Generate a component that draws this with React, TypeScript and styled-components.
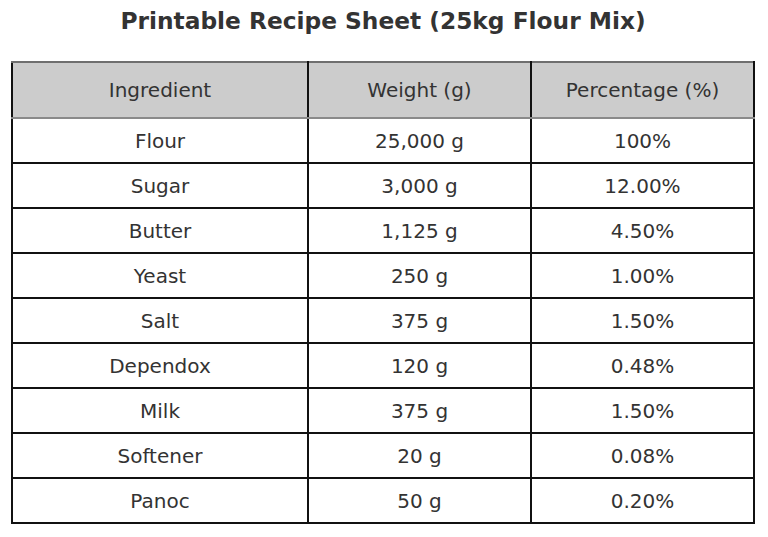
import styled, { createGlobalStyle } from "styled-components";

interface I_Row {
    name: string;
    weight: string;
    percent: string;
};

const rows: I_Row[] = [
    { name: "Flour", weight: "25,000 g", percent: "100%" },
    { name: "Sugar", weight: "3,000 g", percent: "12.00%" },
    { name: "Butter", weight: "1,125 g", percent: "4.50%" },
    { name: "Yeast", weight: "250 g", percent: "1.00%" },
    { name: "Salt", weight: "375 g", percent: "1.50%" },
    { name: "Dependox", weight: "120 g", percent: "0.48%" },
    { name: "Milk", weight: "375 g", percent: "1.50%" },
    { name: "Softener", weight: "20 g", percent: "0.08%" },
    { name: "Panoc", weight: "50 g", percent: "0.20%" },
];

const GlobalStyle = createGlobalStyle`
    html, body {
        margin: 0;
        padding: 0;
        background: #ffffff;
        font-family: "DejaVu Sans", "Liberation Sans", sans-serif;
    }
`;

const Page = styled.div`
    width: 768px;
    height: 537px;
    display: flex;
    flex-direction: column;
    padding: 7px 0 0 11px;
    box-sizing: border-box;
`;

const Title = styled.h1`
    width: 744px;
    margin: 0;
    text-align: center;
    font-size: 23.3px;
    font-weight: bold;
    color: #333333;
    line-height: 28px;
`;

const Table = styled.table`
    margin-top: 26px;
    width: 743px;
    border-collapse: collapse;
    table-layout: fixed;
    color: #333333;
    font-size: 20px;

    th, td {
        text-align: center;
        padding: 0;
        border: 2px solid #111111;
    }
`;

const HeadCell = styled.th<{ $w: number }>`
    width: ${(props) => props.$w}px;
    height: 54px;
    background-color: #cccccc;
    font-weight: normal;
    && {
        border-top-color: #6f6f6f;
        border-bottom-color: #8a8a8a;
    }
`;

const Cell = styled.td`
    height: 43px;
`;

function App() {
    return (
        <Page>
            <GlobalStyle />
            <Title>Printable Recipe Sheet (25kg Flour Mix)</Title>
            <Table>
                <thead>
                    <tr>
                        <HeadCell $w={294}>Ingredient</HeadCell>
                        <HeadCell $w={221}>Weight (g)</HeadCell>
                        <HeadCell $w={221}>Percentage (%)</HeadCell>
                    </tr>
                </thead>
                <tbody>
                    {
                        rows.map((row) => {
                            return (
                                <tr key={row.name}>
                                    <Cell>{row.name}</Cell>
                                    <Cell>{row.weight}</Cell>
                                    <Cell>{row.percent}</Cell>
                                </tr>
                            );
                        })
                    }
                </tbody>
            </Table>
        </Page>
    );
};

export default App;
